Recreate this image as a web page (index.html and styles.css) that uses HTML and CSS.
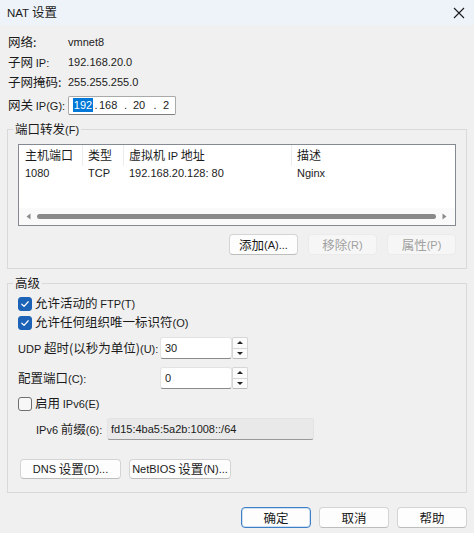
FILE: index.html
```html
<!DOCTYPE html>
<html lang="zh-CN">
<head>
<meta charset="utf-8">
<title>NAT 设置</title>
<link rel="stylesheet" href="styles.css">
</head>
<body>
<div class="win">
  <div class="titlebar">
    <span class="title"><span class="e et">NAT</span> 设置</span>
    <svg class="close" width="12" height="12" viewBox="0 0 12 12"><path d="M1 1L11 11M11 1L1 11" stroke="#1b1b1b" stroke-width="1.1" fill="none"/></svg>
  </div>

  <div class="info">
    <div class="row"><span class="lbl">网络:</span><span class="e">vmnet8</span></div>
    <div class="row"><span class="lbl">子网 <span class="e">IP:</span></span><span class="e">192.168.20.0</span></div>
    <div class="row"><span class="lbl">子网掩码:</span><span class="e">255.255.255.0</span></div>
    <div class="row gw">
      <span class="lbl">网关 <span class="e">IP(G):</span></span>
      <div class="ipbox e">
        <span class="f1 sel">192</span><span class="d1">.</span><span class="f2">168</span><span class="d2">.</span><span class="f3">20</span><span class="d3">.</span><span class="f4">2</span>
      </div>
    </div>
  </div>

  <fieldset class="group g1">
    <legend>端口转发<span class="e">(F)</span></legend>
    <div class="list">
      <div class="lgrid lhead">
        <div class="cell">主机端口</div>
        <div class="cell">类型</div>
        <div class="cell">虚拟机 <span class="e">IP</span> 地址</div>
        <div class="cell last">描述</div>
      </div>
      <div class="lgrid lrow e">
        <div class="cell">1080</div>
        <div class="cell">TCP</div>
        <div class="cell">192.168.20.128: 80</div>
        <div class="cell last">Nginx</div>
      </div>
      <div class="hscroll">
        <svg width="5" height="7" viewBox="0 0 5 7"><path d="M4.5 0.5L0.5 3.5L4.5 6.5Z" fill="#8a8a8a"/></svg>
        <div class="thumb"></div>
        <svg width="5" height="7" viewBox="0 0 5 7"><path d="M0.5 0.5L4.5 3.5L0.5 6.5Z" fill="#8a8a8a"/></svg>
      </div>
    </div>
    <div class="btnrow">
      <div class="btn">添加<span class="e">(A)...</span></div>
      <div class="btn dis">移除<span class="e">(R)</span></div>
      <div class="btn dis">属性<span class="e">(P)</span></div>
    </div>
  </fieldset>

  <fieldset class="group g2">
    <legend>高级</legend>
    <div class="cbrow first">
      <span class="cb on"><svg width="14" height="14" viewBox="0 0 14 14"><path d="M3.3 7.3L5.9 9.8L10.8 4.4" stroke="#fff" stroke-width="1.4" fill="none" stroke-linecap="round" stroke-linejoin="round"/></svg></span>
      <span>允许活动的 <span class="e">FTP(T)</span></span>
    </div>
    <div class="cbrow">
      <span class="cb on"><svg width="14" height="14" viewBox="0 0 14 14"><path d="M3.3 7.3L5.9 9.8L10.8 4.4" stroke="#fff" stroke-width="1.4" fill="none" stroke-linecap="round" stroke-linejoin="round"/></svg></span>
      <span>允许任何组织唯一标识符<span class="e">(O)</span></span>
    </div>
    <div class="frow udp">
      <span class="flbl"><span class="e">UDP</span> 超时(以秒为单位)<span class="e">(U):</span></span>
      <div class="tbox e">30</div>
      <div class="spin"><span class="up"></span><span class="dn"></span></div>
    </div>
    <div class="frow cfg">
      <span class="flbl">配置端口<span class="e">(C):</span></span>
      <div class="tbox e">0</div>
      <div class="spin"><span class="up"></span><span class="dn"></span></div>
    </div>
    <div class="cbrow v6">
      <span class="cb"></span>
      <span>启用 <span class="e">IPv6(E)</span></span>
    </div>
    <div class="frow pfx">
      <span class="plbl"><span class="e">IPv6</span> 前缀<span class="e">(6):</span></span>
      <div class="tbox dbox e">fd15:4ba5:5a2b:1008::/64</div>
    </div>
    <div class="btnrow2">
      <div class="btn b-dns"><span class="e">DNS</span>&nbsp;设置<span class="e">(D)...</span></div>
      <div class="btn b-nb"><span class="e">NetBIOS</span>&nbsp;设置<span class="e">(N)...</span></div>
    </div>
  </fieldset>

  <div class="footer">
    <div class="btn fb def">确定</div>
    <div class="btn fb">取消</div>
    <div class="btn fb">帮助</div>
  </div>
</div>
</body>
</html>
```
FILE: styles.css
```css
* { box-sizing: border-box; }

body {
  margin: 0;
  background: #f0f0f0;
  font-family: "Noto Sans CJK SC", "Liberation Sans", sans-serif;
  font-size: 12.5px;
  line-height: 16px;
  color: #1b1b1b;
}

.e {
  font-family: "Liberation Sans", "Noto Sans CJK SC", sans-serif;
  font-size: 11px;
}

.win {
  width: 474px;
  height: 533px;
  background: #f0f0f0;
  overflow: hidden;
}

/* title bar */
.titlebar {
  height: 25px;
  background: #eef3f9;
  display: flex;
  align-items: center;
  justify-content: space-between;
  padding: 0 9px 0 7px;
}
.title { font-size: 12.5px; }
.title .et { font-size: 11.5px; }
.close { display: block; }

/* info rows */
.info { padding: 7px 0 0 8px; }
.row {
  display: flex;
  align-items: center;
  height: 20px;
}
.lbl { width: 60px; flex: none; }
.row.gw { height: 22px; margin-top: 2px; }

.ipbox {
  width: 108px;
  height: 19px;
  background: #fff;
  border: 1px solid #a9a9a9;
  border-bottom-color: #7d7d7d;
  border-radius: 2px;
  display: flex;
  align-items: center;
  padding-left: 4px;
}
.ipbox span { display: block; line-height: 14px; }
.sel { background: #0078d7; color: #fff; }
.f1 { width: 20px; text-align: center; }
.d1 { width: 6px; text-align: center; }
.f2 { width: 19px; }
.d2 { width: 15px; text-align: center; }
.f3 { width: 14px; }
.d3 { width: 16px; text-align: center; }

/* group boxes */
.group {
  margin: 5px 7px 0;
  padding: 6px 10px 13px;
  border: 1px solid #d9d9d9;
  min-width: 0;
}
.group legend {
  padding: 0 2px;
  margin-left: -5px;
  line-height: 16px;
}
.g2 { margin-top: 6px; padding-top: 3px; }

/* list view */
.list {
  height: 82px;
  background: #fff;
  border: 1px solid #858a92;
  display: flex;
  flex-direction: column;
}
.lgrid {
  display: grid;
  grid-template-columns: 64px 41px 168px 1fr;
  height: 19px;
}
.lhead { font-size: 12px; }
.cell {
  display: block;
  line-height: 19px;
  padding-left: 5px;
  white-space: nowrap;
}
.cell:first-child { padding-left: 6px; }
.lhead .cell { border-right: 1px solid #ececec; }
.lhead .cell.last { border-right: none; }

.hscroll {
  margin-top: auto;
  height: 17px;
  background: #fafafa;
  display: flex;
  align-items: center;
  padding: 0 8px 0 7px;
  gap: 6px;
}
.hscroll svg { display: block; flex: none; }
.thumb {
  flex: 1;
  height: 5px;
  border-radius: 3px;
  background: #8a8a8a;
}

/* buttons */
.btn {
  height: 21px;
  background: #fdfdfd;
  border: 1px solid #d4d4d4;
  border-bottom-color: #bdbdbd;
  border-radius: 4px;
  display: flex;
  align-items: center;
  justify-content: center;
  white-space: nowrap;
}
.btn.dis {
  background: #f6f6f6;
  border-color: #ebebeb;
  color: #a0a0a0;
}
.btnrow {
  display: flex;
  justify-content: flex-end;
  gap: 10px;
  margin-top: 8px;
}
.btnrow .btn { width: 69px; }

/* checkboxes */
.cbrow {
  display: flex;
  align-items: center;
  height: 19px;
  gap: 3px;
}
.cb {
  width: 14px;
  height: 14px;
  flex: none;
  border-radius: 3px;
  border: 1px solid #6f6f6f;
  background: #f7f7f7;
  display: flex;
  align-items: center;
  justify-content: center;
}
.cb svg { display: block; }
.cb.on {
  background: #1c63b7;
  border-color: #1c63b7;
}
.cbrow.v6 { margin-top: 5px; }

/* fields */
.frow {
  display: flex;
  align-items: center;
  height: 22px;
}
.frow.udp { margin-top: 5px; }
.frow.cfg { margin-top: 8px; }
.frow.pfx { margin-top: 5px; }
.flbl { width: 142px; flex: none; }
.plbl { width: 71px; flex: none; margin-left: 18px; }

.tbox {
  width: 72px;
  height: 22px;
  background: #fff;
  border: 1px solid #e3e3e3;
  border-bottom-color: #8a8a8a;
  border-radius: 3px;
  display: flex;
  align-items: center;
  padding-left: 4px;
}
.tbox.dbox {
  width: 207px;
  background: #e9e9e9;
  border-color: #e3e3e3;
  border-bottom-color: #9a9a9a;
  padding-left: 3px;
}

.spin {
  width: 16px;
  height: 22px;
  display: flex;
  flex-direction: column;
}
.spin span {
  flex: 1;
  background: #fbfbfb;
  border: 1px solid #d6d6d6;
  display: flex;
  align-items: center;
  justify-content: center;
}
.spin .up { border-radius: 2px 2px 0 0; border-bottom: none; }
.spin .dn { border-radius: 0 0 2px 2px; border-bottom-color: #b9b9b9; }
.spin .up::before {
  content: "";
  border-left: 3px solid transparent;
  border-right: 3px solid transparent;
  border-bottom: 3px solid #222;
}
.spin .dn::before {
  content: "";
  border-left: 3px solid transparent;
  border-right: 3px solid transparent;
  border-top: 3px solid #222;
}

.btnrow2 {
  display: flex;
  gap: 8px;
  margin-top: 19px;
  margin-left: 2px;
}
.btnrow2 .btn { height: 20px; }
.b-dns { width: 101px; }
.b-nb { width: 102px; }

/* footer */
.footer {
  display: flex;
  justify-content: flex-end;
  gap: 8px;
  margin-top: 14px;
  padding-right: 7px;
}
.fb { width: 70px; }
.fb.def {
  border: 1px solid #3d7fc4;
  box-shadow: inset 0 0 0 1px #cfe0f2;
}
```
